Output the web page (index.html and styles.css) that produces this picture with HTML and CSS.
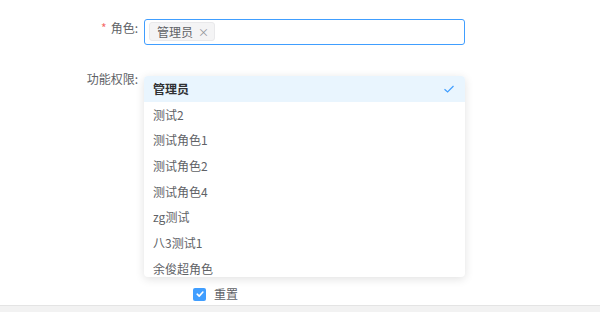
FILE: index.html
```html
<!DOCTYPE html>
<html>
<head>
<meta charset="utf-8">
<link rel="stylesheet" href="styles.css">
</head>
<body>
<div class="page">
  <div class="form">
    <div class="row row-role">
      <label class="label"><span class="req">*</span>角色:</label>
      <div class="control">
        <div class="select">
          <span class="tag">管理员<span class="close">×</span></span>
        </div>
      </div>
    </div>
    <div class="row row-perm">
      <label class="label">功能权限:</label>
      <div class="control">
        <div class="perm-body"></div>
      </div>
    </div>
    <div class="row row-check">
      <span class="checkbox"><svg width="10" height="10" viewBox="0 0 10 10"><path d="M2.2 5.2 L4.2 7.1 L7.9 3" fill="none" stroke="#fff" stroke-width="1.6" stroke-linecap="round" stroke-linejoin="round"/></svg></span>
      <span class="check-text">重置</span>
    </div>
  </div>
  <div class="footer"></div>

  <ul class="dropdown">
    <li class="item selected">管理员<svg class="tick" width="12" height="12" viewBox="0 0 12 12"><path d="M1.5 6.2 L4.6 9 L10.5 3" fill="none" stroke="#409eff" stroke-width="1.2"/></svg></li>
    <li class="item">测试2</li>
    <li class="item">测试角色1</li>
    <li class="item">测试角色2</li>
    <li class="item">测试角色4</li>
    <li class="item">zg测试</li>
    <li class="item">八3测试1</li>
    <li class="item">余俊超角色</li>
  </ul>
</div>
</body>
</html>
```
FILE: styles.css
```css
* { box-sizing: border-box; }
html, body { margin: 0; padding: 0; }
body {
  width: 600px;
  height: 312px;
  overflow: hidden;
  background: #fff;
  font-family: "Noto Sans CJK SC", "Liberation Sans", sans-serif;
  color: #606266;
  font-size: 12px;
}
.page { position: relative; width: 600px; height: 312px; display: flex; flex-direction: column; }
.form { flex: 1; padding-top: 19px; }
.row { display: flex; align-items: flex-start; }
.label {
  width: 144px;
  padding-right: 6px;
  text-align: right;
  color: #606266;
  font-size: 12px;
  line-height: 16px;
}
.row-role .label { margin-top: 1px; }
.req { color: #f56c6c; margin-right: 4px; }
.control { width: 321px; }
.select {
  height: 26px;
  border: 1px solid #409eff;
  border-radius: 3px;
  padding: 0 4px 1px;
  display: flex;
  align-items: center;
}
.tag {
  display: inline-flex;
  align-items: center;
  height: 19px;
  padding: 0 5px 0 7px;
  background: #f4f4f5;
  border: 1px solid #e9e9eb;
  border-radius: 3px;
  color: #606266;
  font-size: 12px;
}
.close { margin-left: 5px; font-size: 11px; color: #909399; }
.row-perm { margin-top: 26px; }
.perm-body { height: 191px; }
.row-check { padding-left: 193px; align-items: center; height: 14px; margin-top: 25px; }
.checkbox {
  width: 13px; height: 13px;
  background: #409eff;
  border-radius: 2px;
  display: inline-flex; align-items: center; justify-content: center;
}
.check-text { margin-left: 8px; color: #606266; font-size: 12px; line-height: 14px; }
.footer {
  height: 7px;
  border-top: 1px solid #e4e4e4;
  background: #f2f2f2;
}
.dropdown {
  position: absolute;
  left: 144px;
  top: 76px;
  width: 321px;
  height: 201px;
  margin: 0;
  padding: 0;
  list-style: none;
  background: #fff;
  border-radius: 4px;
  box-shadow: 0 2px 10px rgba(0,0,0,0.12);
  overflow: hidden;
}
.item {
  height: 25.7px;
  line-height: 25.7px;
  padding: 0 10px 0 9px;
  color: #606266;
  font-size: 12px;
  display: flex;
  align-items: center;
  justify-content: space-between;
}
.item.selected { background: #e9f5fe; color: #303133; font-weight: 700; }
.tick { margin-right: 0; }
```
